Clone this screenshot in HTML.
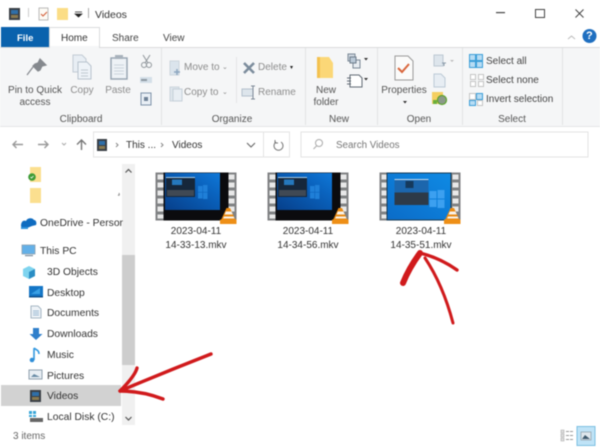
<!DOCTYPE html>
<html><head><meta charset="utf-8"><style>
html,body{margin:0;padding:0;background:#fff}
#r{position:relative;width:600px;height:447px;overflow:hidden;background:#fff;font-family:"Liberation Sans",sans-serif;font-size:10px;color:#333;filter:blur(.5px)}
#r div,#r span,#r svg{position:absolute}
.t{white-space:nowrap;line-height:14px;margin-top:1px}
.c{text-align:center}
.g{color:#8c8c8c}
.d{color:#555}
.n{font-size:10.3px;color:#333;margin-top:1.500px}
.sep{width:1px;background:#e2e3e4}
</style></head><body><div id="r">

<!-- title bar -->
<svg style="left:0;top:0" width="600" height="130" viewBox="0 0 600 130">
<rect x="9" y="8" width="11" height="12" fill="#3a3f46"/><rect x="11" y="10" width="7" height="4" fill="#2f6fa8"/><rect x="11" y="15" width="7" height="3" fill="#8a7a50"/>
<rect x="28" y="8" width="1" height="9" fill="#ccc"/>
<rect x="39" y="8" width="9" height="12" fill="#fdfaf5" stroke="#aaa" stroke-width=".8"/><path d="M41 14l2 2 4-4" fill="none" stroke="#d2603a" stroke-width="1.100"/>
<rect x="57" y="8" width="11" height="12" fill="#fbdd86"/>
<path d="M75 12h7M75 14l3.500 3 3.500-3z" fill="#222" stroke="#222" stroke-width=".7"/>
<rect x="88" y="8" width="1" height="10" fill="#aaa"/>
<!-- window buttons -->
<rect x="496" y="12" width="9" height="1.200" fill="#444"/>
<rect x="535.500" y="9.500" width="9" height="8" fill="none" stroke="#444" stroke-width="1"/>
<path d="M575.500 9.500l8 8M583.500 9.500l-8 8" stroke="#444" stroke-width="1" fill="none"/>
<path d="M568 39l3.500-3 3.500 3" fill="none" stroke="#bbb" stroke-width="1"/>
<circle cx="589.500" cy="36" r="7" fill="#1f6fc0"/>
<!-- ribbon -->
<rect x="0" y="47" width="600" height="79" fill="#f5f6f7"/>
<rect x="0" y="47" width="600" height="1" fill="#dadbdc"/>
<rect x="0" y="126" width="600" height="1" fill="#e4e5e6"/>
<rect x="1" y="27" width="48" height="20" fill="#0a62ad"/>
<path d="M49.500 48V27.500H99.500V48" fill="#fff" stroke="#dadbdc"/>
<rect x="50" y="46" width="49" height="3" fill="#f5f6f7"/>
<!-- clipboard icons -->
<path d="M40 59l6 6-4 1-2 4-2 1-5-5 2-2 3-1zM33 67l-6 8" fill="#85898e" stroke="#85898e" stroke-width="1.200"/>
<path d="M73 55h9l4 4v13h-13z" fill="#e8eef4" stroke="#c2cbd4"/><path d="M78 62h9l4 4v13h-13z" fill="#eef3f8" stroke="#b8c3ce"/><path d="M81 70h7M81 73h7M81 76h7" stroke="#c0c8d0"/>
<rect x="111" y="58" width="16" height="21" fill="#eef2f6" stroke="#94a3b0" stroke-width="1.400"/><rect x="115" y="55" width="8" height="4" fill="#a8b2bc"/><path d="M114 65h10M114 68h10M114 71h10M114 74h10" stroke="#ccd5dd"/>
<path d="M143 55l5 8M150 55l-5 8" stroke="#8f959a" stroke-width="1"/><circle cx="144" cy="65" r="2.500" fill="none" stroke="#8f959a"/><circle cx="149" cy="65" r="2.500" fill="none" stroke="#8f959a"/>
<rect x="140" y="77" width="12" height="6" fill="#d4dfe8"/><rect x="141" y="79" width="6" height="2" fill="#8d98a2"/>
<rect x="141" y="93" width="10" height="12" fill="#e9eff5" stroke="#7d92a8"/><path d="M144 97h4v4h-4z" fill="#6f8296"/>
<!-- organize icons -->
<path d="M170 61h9l0 14h-9z" fill="#dbe4ec" stroke="#ccd5dd"/><path d="M174 72h6M177 69v6" stroke="#8ca6bf" stroke-width="1.500"/>
<path d="M170 87h9v14h-9z" fill="#dde5ec" stroke="#ccd5dd"/><rect x="173" y="89" width="9" height="12" fill="#e8eef3" stroke="#c5cfd8"/>
<path d="M244 63l10 10M254 63l-10 10" stroke="#7c8c9c" stroke-width="2.600"/>
<rect x="242" y="89" width="11" height="7" fill="#dde5ec" stroke="#b4c0cc"/><path d="M251 86h4M253 86v13M251 99h4" stroke="#7c8896" fill="none"/>
<rect x="236" y="57" width="1" height="46" fill="#e4e5e6"/>
<!-- new -->
<path d="M317 57h12l4 6v15h-16z" fill="#fbd777"/><path d="M317 78V57h3v21z" fill="#f3c14f"/>
<rect x="348" y="54" width="7" height="7" fill="#cfd8e0" stroke="#7a8896"/><rect x="353" y="60" width="7" height="8" fill="#e8edf2" stroke="#7a8896"/><rect x="350" y="57" width="6" height="6" fill="#b9c8d6" stroke="#6d7c8b"/>
<path d="M350 75h9l3 3v9h-12z" fill="#fff" stroke="#606a74"/><path d="M347 78h4M347 81h4M347 84h4" stroke="#606a74"/>
<path d="M364 58h4l-2 2.500zM364 78h4l-2 2.500z" fill="#333"/>
<!-- open -->
<path d="M395 56h13l5 5v19h-18z" fill="#fbfbfa" stroke="#9a9a9a"/><path d="M398 68l4 4 7-8" fill="none" stroke="#d9663c" stroke-width="2"/>
<path d="M403 101h4l-2 2.500z" fill="#333"/>
<rect x="434" y="55" width="9" height="11" fill="#dde5ec" stroke="#bcc8d2"/><path d="M444 63v3M442 63h4" stroke="#8a9aa8"/><path d="M450 60h4l-2 2z" fill="#bbb"/>
<path d="M434 74h7l4 4v9h-11z" fill="#e7edf3" stroke="#bccad6"/>
<path d="M432 92h11v12h-11z" fill="#f5cf60"/><circle cx="442" cy="100" r="4.500" fill="#8c9a8a" stroke="#5da32e" stroke-width="1.200"/><rect x="433" y="100" width="4" height="4" fill="#6bb03a"/>
<!-- select -->
<g fill="#b7dcf3" stroke="#3b9ed8"><rect x="469.500" y="54.500" width="6" height="6"/><rect x="476.500" y="54.500" width="6" height="6"/><rect x="469.500" y="61.500" width="6" height="6"/><rect x="476.500" y="61.500" width="6" height="6"/></g>
<g fill="#fff" stroke="#c4c4c4"><rect x="470.500" y="74.500" width="5" height="5"/><rect x="478.500" y="74.500" width="5" height="5"/><rect x="470.500" y="81.500" width="5" height="5"/><rect x="478.500" y="81.500" width="5" height="5"/></g>
<rect x="469.500" y="100.500" width="6" height="5" fill="#b7dcf3" stroke="#3b9ed8"/><rect x="476.500" y="93.500" width="6" height="6" fill="#b7dcf3" stroke="#3b9ed8"/><rect x="469.500" y="93.500" width="6" height="6" fill="#fff" stroke="#c4c4c4"/><rect x="477.500" y="100.500" width="5" height="5" fill="#fff" stroke="#c4c4c4"/>
</svg>
<div class="sep" style="left:161px;top:48px;height:77px"></div>
<div class="sep" style="left:305px;top:48px;height:77px"></div>
<div class="sep" style="left:377px;top:48px;height:77px"></div>
<div class="sep" style="left:462px;top:48px;height:77px"></div>
<div class="sep" style="left:562px;top:48px;height:77px"></div>

<span class="t" style="left:95px;top:7px;font-size:10.500px;color:#333">Videos</span>
<span class="t" style="left:17px;top:30.500px;color:#fff;font-weight:bold;font-size:9.500px">File</span>
<span class="t" style="left:61px;top:30.500px;color:#333;font-size:10px">Home</span>
<span class="t" style="left:112px;top:30.500px;color:#444;font-size:10px">Share</span>
<span class="t" style="left:163px;top:30.500px;color:#444;font-size:10px">View</span>
<span class="t" style="left:586px;top:28px;color:#fff;font-weight:bold;font-size:11px">?</span>

<span class="t d c" style="left:0;width:70px;top:83px;font-size:10px">Pin to Quick</span>
<span class="t d c" style="left:0;width:70px;top:95px;font-size:10px">access</span>
<span class="t g c" style="left:62px;width:40px;top:83px">Copy</span>
<span class="t g c" style="left:98px;width:40px;top:83px">Paste</span>
<span class="t d c" style="left:50px;width:62px;top:111.500px">Clipboard</span>
<span class="t g" style="left:184px;top:60px">Move to</span>
<span class="t g" style="left:184px;top:85px">Copy to</span>
<span class="t g" style="left:222px;top:60px;font-size:7px">⌄</span>
<span class="t g" style="left:222px;top:85px;font-size:7px">⌄</span>
<span class="t g" style="left:258px;top:60px">Delete</span>
<span class="t g" style="left:258px;top:85px">Rename</span>
<span class="t" style="left:290px;top:60px;font-size:6px;color:#222">▾</span>
<span class="t d c" style="left:202px;width:60px;top:111.500px">Organize</span>
<span class="t d c" style="left:305px;width:42px;top:83px">New</span>
<span class="t d c" style="left:305px;width:42px;top:95px">folder</span>
<span class="t d c" style="left:319px;width:40px;top:111.500px">New</span>
<span class="t d c" style="left:380px;width:48px;top:83px">Properties</span>
<span class="t d c" style="left:399px;width:40px;top:111.500px">Open</span>
<span class="t" style="left:486px;top:53.500px;color:#444">Select all</span>
<span class="t" style="left:486px;top:72.500px;color:#444">Select none</span>
<span class="t" style="left:486px;top:91.500px;color:#444">Invert selection</span>
<span class="t d c" style="left:492px;width:40px;top:111.500px">Select</span>

<!-- address bar -->
<svg style="left:0;top:130px" width="600" height="40" viewBox="0 130 600 40">
<path d="M13 144.500h10M16.500 141l-3.500 3.500 3.500 3.500M48 144.500h-10M44.500 141l3.500 3.500-3.500 3.500" fill="none" stroke="#999" stroke-width="1.400"/>
<path d="M62 143l2 2 2-2" fill="none" stroke="#aaa"/>
<path d="M81.500 150v-10M77 144.500l4.500-4.500 4.500 4.500" fill="none" stroke="#777" stroke-width="1.400"/>
<rect x="93.500" y="132" width="196" height="25" fill="#fff" stroke="#e3e3e3"/>
<rect x="263" y="132" width="1" height="25" fill="#e3e3e3"/>
<rect x="301" y="132" width="287" height="25" fill="#fff" stroke="#e3e3e3"/>
<rect x="97" y="139" width="10" height="12" fill="#3a3f46"/><rect x="99" y="141" width="6" height="4" fill="#2f6fa8"/><rect x="99" y="146" width="6" height="3" fill="#8a7a50"/>
<path d="M116 143l2 2-2 2M161 143l2 2-2 2" fill="none" stroke="#888"/>
<path d="M247 143l4 4 4-4" fill="none" stroke="#666" stroke-width="1.100"/>
<path d="M281 142a4.500 4.500 0 1 1-5 0M275 140v3h3" fill="none" stroke="#777"/>
<circle cx="319" cy="143" r="3.500" fill="none" stroke="#aaa"/><path d="M316.500 146l-3 3" stroke="#aaa"/>
</svg>
<span class="t" style="left:126px;top:137.500px;color:#333">This ...</span>
<span class="t" style="left:172px;top:137.500px;color:#333">Videos</span>
<span class="t" style="left:336px;top:137.500px;color:#777;font-size:9.800px">Search Videos</span>

<!-- nav -->
<svg style="left:0;top:160px" width="140" height="287" viewBox="0 160 140 287">
<rect x="122" y="164" width="13" height="261" fill="#f0f0f0"/>
<rect x="122" y="255" width="13" height="110" fill="#cdcdcd"/>
<path d="M125.500 172.500l3-3 3 3M125.500 417l3 3 3-3" fill="none" stroke="#555" stroke-width="1.200"/>
<rect x="1" y="385" width="120" height="21" fill="#d2d2d2"/>
<rect x="30" y="167" width="11" height="15" fill="#fbdf8f"/><circle cx="32" cy="177" r="3.800" fill="#3f9c36"/><path d="M30.500 177l1 1 2-2" stroke="#fff" fill="none" stroke-width=".8"/>
<rect x="30" y="188" width="11" height="15" fill="#fbdf8f"/>
<path d="M118 195q2 1 1-2" fill="none" stroke="#888"/>
<path d="M21 226c0-5 3-6 5-5 1-3 6-4 8-1 2 0 3 3 2 5l-4 1-5 2-5 1z" fill="#0f6cc0"/><path d="M21 227h7v2h-7z" fill="#2f93dd"/>
<rect x="22" y="245" width="13" height="9" fill="#63b0e8" stroke="#8aa0b0" stroke-width=".8"/><rect x="25" y="255" width="8" height="1.200" fill="#7d8f9e"/>
<path d="M29 266l6 3v7l-6 3-6-3v-7z" fill="#7fd4ef"/><path d="M29 272l6-3v7l-6 3z" fill="#2a8dc4"/>
<rect x="29" y="286" width="14" height="11" fill="#1476c6"/><rect x="29" y="296" width="14" height="1.500" fill="#0e4f8a"/><path d="M31 294l9-6v6z" fill="#39a0e5"/>
<path d="M31 306h7l3 3v9h-10z" fill="#eef3f7" stroke="#8fa4b4" stroke-width=".8"/><path d="M33 311h6M33 313h6M33 315h6" stroke="#7fa7c7" stroke-width=".8"/>
<path d="M33 328h6v6h3.500l-6.500 6-6.500-6H33z" fill="#2f7fcb"/>
<path d="M34 348v12M34 348c2 2 5 2 5 6" fill="none" stroke="#3298e0" stroke-width="1.600"/><circle cx="32" cy="360" r="2.300" fill="#2f8ed8"/>
<rect x="29" y="370" width="13" height="9" fill="#e8eef3" stroke="#8fa0ad"/><path d="M31 377l3-3 6 3z" fill="#6a8ca6"/>
<rect x="30" y="390" width="11" height="12" fill="#3a3f46"/><rect x="32" y="392" width="7" height="4" fill="#2f6fa8"/><rect x="32" y="397" width="7" height="3" fill="#8a7a50"/>
<rect x="30" y="418" width="13" height="4" fill="#666"/><rect x="29" y="411" width="3" height="3" fill="#37a6d8"/><rect x="33" y="411" width="3" height="3" fill="#37a6d8"/><rect x="29" y="415" width="3" height="2" fill="#37a6d8"/><rect x="33" y="415" width="3" height="2" fill="#37a6d8"/>
</svg>
<span class="t n" style="left:40px;top:215px">OneDrive - Persor</span>
<span class="t n" style="left:40px;top:243px">This PC</span>
<span class="t n" style="left:47px;top:264px">3D Objects</span>
<span class="t n" style="left:47px;top:285px">Desktop</span>
<span class="t n" style="left:47px;top:305.500px">Documents</span>
<span class="t n" style="left:47px;top:326px">Downloads</span>
<span class="t n" style="left:47px;top:347px">Music</span>
<span class="t n" style="left:47px;top:368px">Pictures</span>
<span class="t n" style="left:47px;top:388px">Videos</span>
<span class="t n" style="left:47px;top:409px">Local Disk (C:)</span>
<span class="t" style="left:13px;top:429px;color:#666;font-size:10px">3 items</span>

<!-- thumbnails -->
<svg style="left:150px;top:165px" width="320" height="65" viewBox="150 165 320 65">
<defs>
<g id="strip">
<rect x="0" y="0" width="81" height="48" fill="#808284"/>
<g fill="#e9e9e9"><rect x="2" y="2" width="6" height="5"/><rect x="2" y="10" width="6" height="5"/><rect x="2" y="18" width="6" height="5"/><rect x="2" y="26" width="6" height="5"/><rect x="2" y="34" width="6" height="5"/><rect x="2" y="42" width="6" height="4"/>
<rect x="73" y="2" width="6" height="5"/><rect x="73" y="10" width="6" height="5"/><rect x="73" y="18" width="6" height="5"/><rect x="73" y="26" width="6" height="5"/><rect x="73" y="34" width="6" height="5"/></g>
</g>
<linearGradient id="b" x1="0" y1="1" x2="1" y2="0"><stop offset="0" stop-color="#073f8a"/><stop offset=".65" stop-color="#0a62bd"/><stop offset="1" stop-color="#0f78d8"/></linearGradient>
<linearGradient id="b2" x1="0" y1="1" x2="1" y2="0"><stop offset="0" stop-color="#0b6cc8"/><stop offset="1" stop-color="#0f8ae4"/></linearGradient>
<g id="vlc"><path d="M71 35.500h3.500l5.500 12h-14.500z" fill="#ea8a12"/><path d="M70.300 39h5.700l1.300 3h-8.200zM68.500 44h9.700l.8 2h-11.400z" fill="#f8f3ea"/><path d="M64.500 47h16.500v4.500h-16.500z" fill="#ee8f16"/></g>
<g id="a"><use href="#strip"/>
<rect x="8" y="0" width="65" height="48" fill="#0b0b0e"/>
<rect x="9.500" y=".5" width="55" height="37" fill="url(#b)"/>
<rect x="10.500" y="5" width="29" height="19.500" fill="#16273b"/><rect x="10.500" y="4.500" width="29" height="1" fill="#a8cde8"/>
<rect x="16.500" y="7" width="10" height="5.500" fill="#2578bd"/><rect x="11.500" y="17.500" width="27" height="6" fill="#404954"/>
<g fill="#1f7fd8"><rect x="42.500" y="13.500" width="4.500" height="6"/><rect x="47.500" y="12.500" width="4.500" height="7"/><rect x="42.500" y="20" width="4.500" height="6"/><rect x="47.500" y="20" width="4.500" height="6.500"/></g>
<use href="#vlc"/></g>
<g id="c"><use href="#strip"/>
<rect x="7" y="0" width="65" height="48" fill="#163a55"/>
<rect x="8" y="1" width="63" height="46" fill="url(#b2)"/>
<rect x="15" y="6.500" width="34" height="26" fill="#1c66ad"/><rect x="15" y="6.500" width="34" height="1" fill="#c8def0"/>
<rect x="15" y="20" width="34" height="12.500" fill="#2d3a48"/>
<rect x="26" y="8.500" width="8" height="7" fill="#15395c"/>
<g fill="#3ca0f0"><rect x="50" y="18.500" width="7" height="7.500"/><rect x="58" y="17.500" width="7" height="8.500"/><rect x="50" y="27" width="7" height="7.500"/><rect x="58" y="27" width="7" height="8.500"/></g>
<use href="#vlc"/></g>
</defs>
<use href="#a" transform="translate(155.500 172.500)"/>
<use href="#a" transform="translate(267.500 172.500)"/>
<use href="#c" transform="translate(379.500 172.500)"/>
</svg>
<span class="t c" style="left:146px;width:100px;top:224px;color:#333;font-size:10px">2023-04-11</span>
<span class="t c" style="left:146px;width:100px;top:237.500px;color:#333;font-size:10px">14-33-13.mkv</span>
<span class="t c" style="left:258px;width:100px;top:224px;color:#333;font-size:10px">2023-04-11</span>
<span class="t c" style="left:258px;width:100px;top:237.500px;color:#333;font-size:10px">14-34-56.mkv</span>
<span class="t c" style="left:371px;width:100px;top:224px;color:#333;font-size:10px">2023-04-11</span>
<span class="t c" style="left:371px;width:100px;top:237.500px;color:#333;font-size:10px">14-35-51.mkv</span>

<!-- status bar view buttons -->
<svg style="left:550px;top:420px" width="50" height="27" viewBox="550 420 50 27">
<rect x="577" y="426.500" width="18" height="19" fill="#bfe3f7" stroke="#7cc0e2"/>
<rect x="581" y="432" width="10" height="8" fill="#dfe7ec" stroke="#8a9aa5" stroke-width=".7"/><path d="M582 439l3-4 5 4z" fill="#3f5a6e"/>
<path d="M561 430h3v3h-3zM561 434h3v3h-3zM561 438h3v3h-3z" fill="#ddd" stroke="#aaa" stroke-width=".6"/>
<path d="M566 431.500h8M566 435.500h8M566 439.500h8" stroke="#999" stroke-dasharray="3 1"/>
</svg>

<!-- red annotations -->
<svg style="left:0;top:0" width="600" height="447" viewBox="0 0 600 447">
<g fill="none" stroke="#d01a1c" stroke-linecap="round" stroke-linejoin="round">
<path d="M211 354Q165 372 120 391" stroke-width="3.400"/>
<path d="M137 368Q135 376 120 391Q142 391 163 399" stroke-width="3.400"/>
<path d="M420 253Q409 268 403 283" stroke-width="6"/>
<path d="M420 253Q440 258 457 270" stroke-width="3.400"/>
<path d="M425 258Q443 285 453 323" stroke-width="3"/>
</g></svg>
</div></body></html>
